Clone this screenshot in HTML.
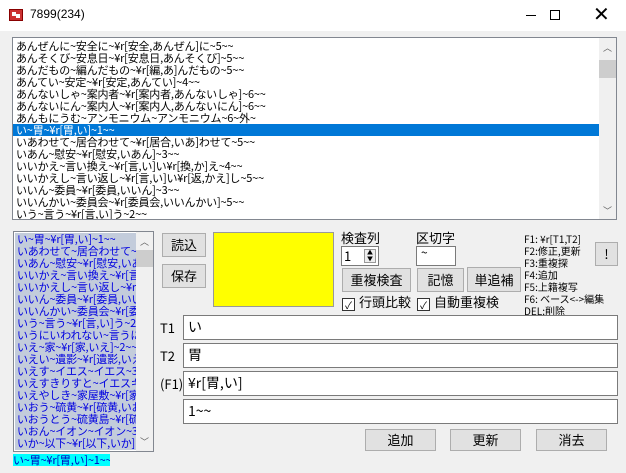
<!DOCTYPE html><html><head><meta charset="utf-8"><style>
*{box-sizing:border-box;margin:0;padding:0}
body{width:626px;height:473px;background:#f0f0f0;font-family:"Liberation Sans","Noto Sans CJK JP",sans-serif;position:relative;overflow:hidden;font-size:12px;color:#000}
.a{position:absolute}
.title{left:0;top:0;width:626px;height:31px;background:#fff}
.lb{background:#fff;border:1px solid #828790;overflow:hidden}
.row{height:12px;line-height:12px;font-size:11px;white-space:nowrap;padding-left:3px;font-family:"Noto Sans CJK JP",sans-serif;letter-spacing:-0.2px;overflow:hidden}
.sb{background:#f0f0f0}
.btn{background:#e1e1e1;border:1px solid #adadad;text-align:center;font-size:13px;font-family:"Noto Sans CJK JP",sans-serif}
.tb{background:#fff;border:1px solid #7a7a7a;font-size:14px;padding-left:4px;font-family:"Noto Sans CJK JP",sans-serif}
.lbl{font-size:13px;font-family:"Noto Sans CJK JP",sans-serif}
.cb{width:13px;height:13px;border:1px solid #333;background:#fff;display:inline-block;vertical-align:-2px;margin-right:4px;font-size:10px;line-height:11px;text-align:center}
</style></head><body>
<div class="a title">
<div class="a" style="left:9px;top:9px;width:14px;height:12px;background:#c33;border:1px solid #800"><div style="position:absolute;left:2px;top:2px;width:4px;height:4px;background:#fff"></div><div style="position:absolute;right:2px;bottom:2px;width:4px;height:4px;background:#fff"></div></div>
<div class="a" style="left:30px;top:7px;font-size:12px">7899(234)</div>
<div class="a" style="left:526px;top:15px;width:10px;height:1px;background:#000"></div>
<div class="a" style="left:550px;top:10px;width:10px;height:10px;border:1px solid #000"></div>
<div class="a" style="left:593px;top:2px;font-size:20px;font-weight:300">✕</div>
</div>
<div class="a lb" style="left:12px;top:37px;width:605px;height:183px">
<div style="padding-top:2px;width:586px">
<div class="row">あんぜんに~安全に~¥r[安全,あんぜん]に~5~~</div>
<div class="row">あんそくび~安息日~¥r[安息日,あんそくび]~5~~</div>
<div class="row">あんだもの~編んだもの~¥r[編,あ]んだもの~5~~</div>
<div class="row">あんてい~安定~¥r[安定,あんてい]~4~~</div>
<div class="row">あんないしゃ~案内者~¥r[案内者,あんないしゃ]~6~~</div>
<div class="row">あんないにん~案内人~¥r[案内人,あんないにん]~6~~</div>
<div class="row">あんもにうむ~アンモニウム~アンモニウム~6~外~</div>
<div class="row" style="background:#0078d7;color:#fff">い~胃~¥r[胃,い]~1~~</div>
<div class="row">いあわせて~居合わせて~¥r[居合,いあ]わせて~5~~</div>
<div class="row">いあん~慰安~¥r[慰安,いあん]~3~~</div>
<div class="row">いいかえ~言い換え~¥r[言,い]い¥r[換,か]え~4~~</div>
<div class="row">いいかえし~言い返し~¥r[言,い]い¥r[返,かえ]し~5~~</div>
<div class="row">いいん~委員~¥r[委員,いいん]~3~~</div>
<div class="row">いいんかい~委員会~¥r[委員会,いいんかい]~5~~</div>
<div class="row">いう~言う~¥r[言,い]う~2~~</div>
</div>
<div class="a sb" style="right:0;top:0;width:17px;height:181px">
<div class="a" style="left:4px;top:3px;font-size:9px;color:#606060">︿</div>
<div class="a" style="left:0;top:22px;width:17px;height:18px;background:#cdcdcd"></div>
<div class="a" style="left:4px;top:166px;font-size:9px;color:#606060">﹀</div>
</div>
</div>
<div class="a lb" style="left:13px;top:231px;width:141px;height:221px">
<div class="a" style="left:1px;top:1px;width:122px;height:217px;background:#c3ccdb;overflow:hidden;color:#0000e0">
<div class="row" style="padding-left:2px">い~胃~¥r[胃,い]~1~~</div>
<div class="row" style="padding-left:2px">いあわせて~居合わせて~¥r</div>
<div class="row" style="padding-left:2px">いあん~慰安~¥r[慰安,いあん</div>
<div class="row" style="padding-left:2px">いいかえ~言い換え~¥r[言</div>
<div class="row" style="padding-left:2px">いいかえし~言い返し~¥r[言</div>
<div class="row" style="padding-left:2px">いいん~委員~¥r[委員,いいん</div>
<div class="row" style="padding-left:2px">いいんかい~委員会~¥r[委</div>
<div class="row" style="padding-left:2px">いう~言う~¥r[言,い]う~2~~</div>
<div class="row" style="padding-left:2px">いうにいわれない~言うに言</div>
<div class="row" style="padding-left:2px">いえ~家~¥r[家,いえ]~2~~</div>
<div class="row" style="padding-left:2px">いえい~遺影~¥r[遺影,いえい</div>
<div class="row" style="padding-left:2px">いえす~イエス~イエス~3~外</div>
<div class="row" style="padding-left:2px">いえすきりすと~イエスキリス</div>
<div class="row" style="padding-left:2px">いえやしき~家屋敷~¥r[家</div>
<div class="row" style="padding-left:2px">いおう~硫黄~¥r[硫黄,いお</div>
<div class="row" style="padding-left:2px">いおうとう~硫黄島~¥r[硫黄</div>
<div class="row" style="padding-left:2px">いおん~イオン~イオン~3~~</div>
<div class="row" style="padding-left:2px">いか~以下~¥r[以下,いか]</div>
</div>
<div class="a sb" style="right:0;top:0;width:17px;height:219px">
<div class="a" style="left:4px;top:3px;font-size:9px;color:#606060">︿</div>
<div class="a" style="left:0;top:18px;width:17px;height:17px;background:#cdcdcd"></div>
<div class="a" style="left:4px;top:203px;font-size:9px;color:#606060">﹀</div>
</div>
</div>
<div class="a row" style="left:13px;top:454px;width:97px;background:#00ffff;color:#0000c0;padding-left:0">い~胃~¥r[胃,い]~1~~</div>
<div class="a btn" style="left:162px;top:233px;width:44px;height:24px;line-height:22px">読込</div>
<div class="a btn" style="left:162px;top:264px;width:44px;height:24px;line-height:22px">保存</div>
<div class="a" style="left:213px;top:232px;width:121px;height:75px;background:#ffff00;border:1px solid #999"></div>
<div class="a lbl" style="left:341px;top:228px">検査列</div>
<div class="a lbl" style="left:416px;top:228px">区切字</div>
<div class="a tb" style="left:341px;top:246px;width:38px;height:20px;font-size:13px;line-height:18px;padding-left:2px">1
<div class="a" style="left:22px;top:2px;width:12px;height:14px;border:1px solid #999;background:#eee;font-size:6px;line-height:6px;text-align:center">▲<br>▼</div></div>
<div class="a tb" style="left:416px;top:246px;width:40px;height:20px;font-size:12px;line-height:12px">~</div>
<div class="a btn" style="left:342px;top:268px;width:69px;height:24px;line-height:22px">重複検査</div>
<div class="a btn" style="left:417px;top:268px;width:47px;height:24px;line-height:22px">記憶</div>
<div class="a btn" style="left:467px;top:267px;width:54px;height:25px;line-height:23px">単追補</div>
<div class="a lbl" style="left:342px;top:292px"><span class="cb">✓</span>行頭比較</div>
<div class="a lbl" style="left:417px;top:292px"><span class="cb">✓</span>自動重複検</div>
<div class="a" style="left:524px;top:233px;font-size:10px;line-height:12px;font-family:'Noto Sans CJK JP',sans-serif;white-space:nowrap">F1: ¥r[T1,T2]<br>F2:修正,更新<br>F3:重複探<br>F4:追加<br>F5:上籍複写<br>F6: ベース<->編集<br>DEL:削除</div>
<div class="a btn" style="left:595px;top:242px;width:23px;height:24px;line-height:22px">!</div>
<div class="a lbl" style="left:160px;top:318px">T1</div>
<div class="a lbl" style="left:160px;top:346px">T2</div>
<div class="a lbl" style="left:160px;top:374px">(F1)</div>
<div class="a tb" style="left:183px;top:315px;width:435px;height:25px;line-height:23px">い</div>
<div class="a tb" style="left:183px;top:343px;width:435px;height:25px;line-height:23px">胃</div>
<div class="a tb" style="left:183px;top:371px;width:435px;height:25px;line-height:23px">¥r[胃,い]</div>
<div class="a tb" style="left:183px;top:399px;width:435px;height:25px;line-height:23px">1~~</div>
<div class="a btn" style="left:365px;top:429px;width:71px;height:22px;line-height:20px">追加</div>
<div class="a btn" style="left:450px;top:429px;width:71px;height:22px;line-height:20px">更新</div>
<div class="a btn" style="left:536px;top:429px;width:71px;height:22px;line-height:20px">消去</div>
</body></html>
